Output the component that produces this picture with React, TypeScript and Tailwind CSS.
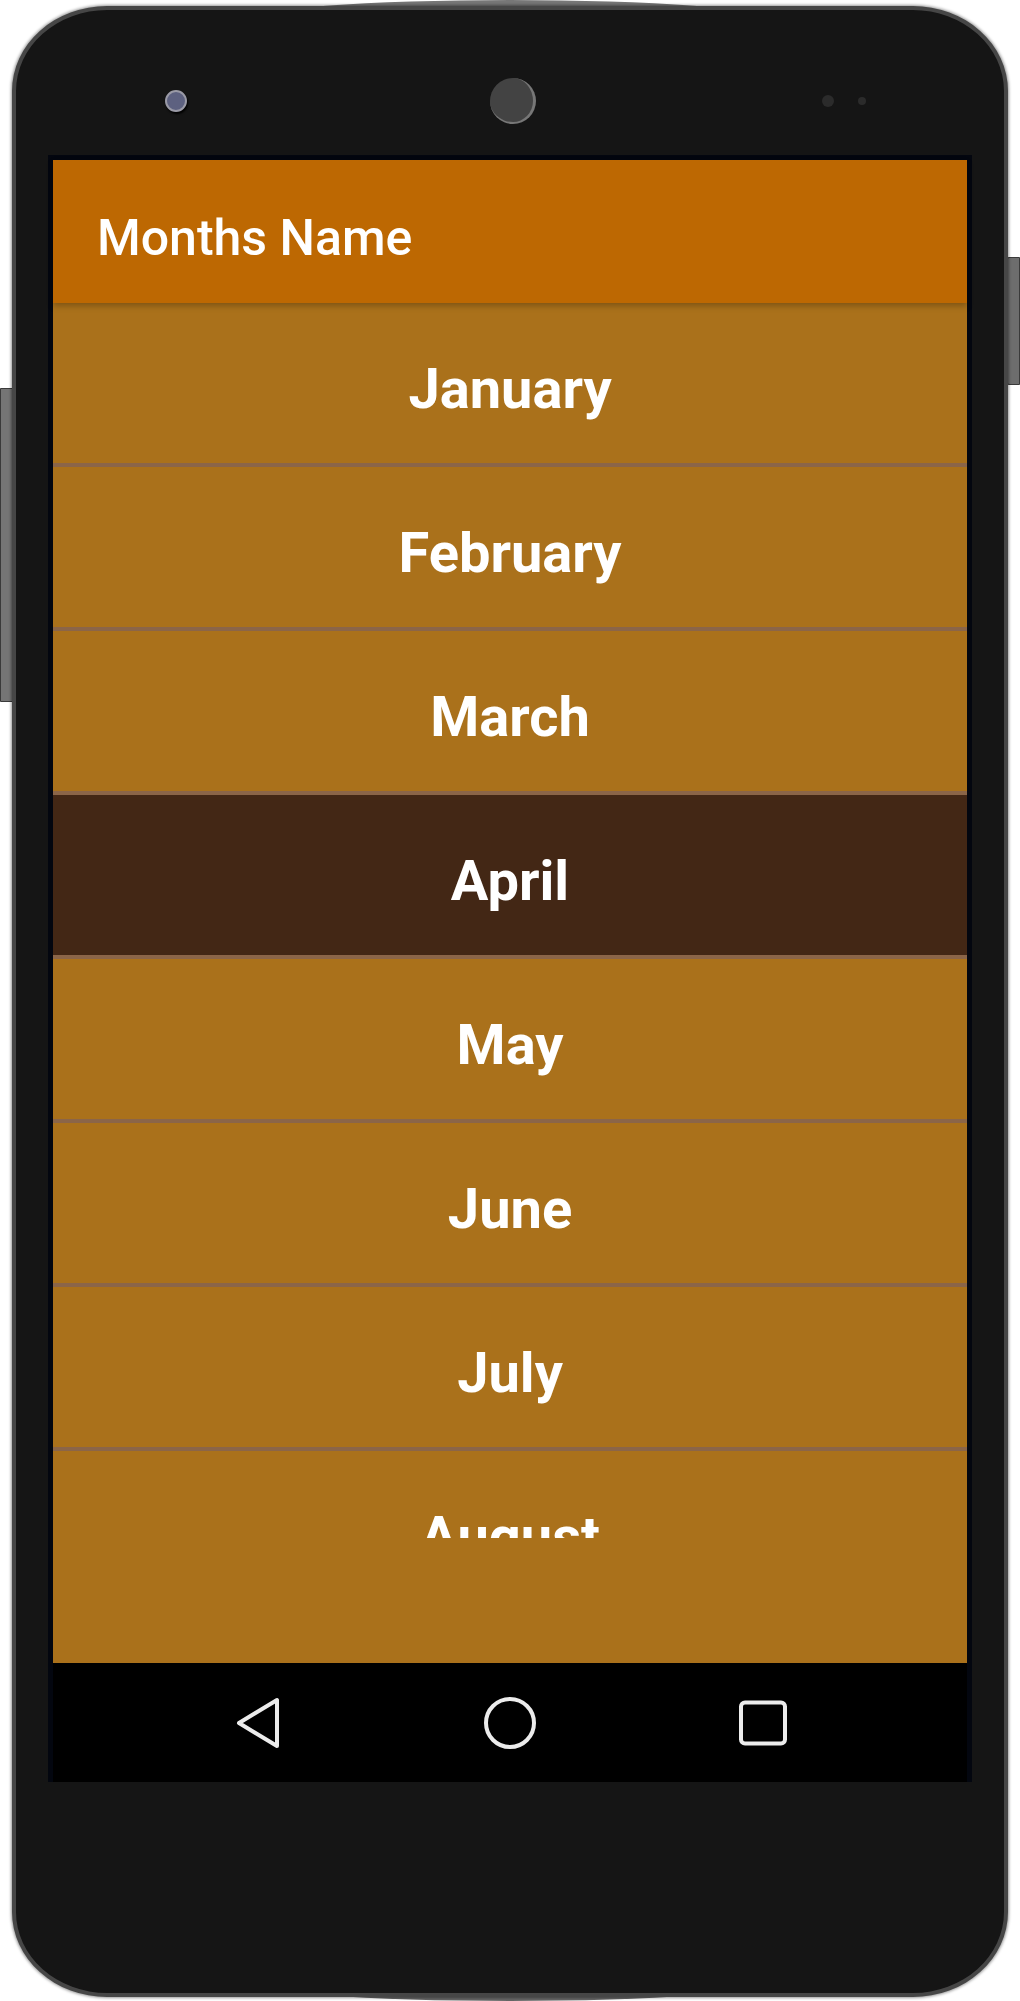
// only the rows that the screen shows; the list is clipped inside August
const MONTHS = ['January', 'February', 'March', 'April', 'May', 'June', 'July', 'August']
const SELECTED = 'April'

export default function App() {
  return (
    <div className="relative w-[1020px] h-[2001px] bg-white overflow-hidden font-['Roboto','Liberation_Sans',sans-serif]">
      {/* side buttons + bevel bumps */}
      <div className="absolute right-0 top-[257px] w-[13px] h-[128px] rounded-l-[2px] bg-[#6d6d6d] border border-[#3a3a3a]" />
      <div className="absolute left-0 top-[388px] w-[14px] h-[314px] rounded-r-[2px] bg-[#757575] border border-[#3a3a3a]" />
      <div className="absolute left-[250px] top-0 w-[520px] h-[40px] rounded-[50%] bg-[#777]" />
      <div className="absolute left-[250px] bottom-0 w-[520px] h-[40px] rounded-[50%] bg-[#666]" />

      <div className="relative pt-[6px] px-[12px]">
        <div className="h-[1991px] flex flex-col bg-[#151515] rounded-[95px/85px] border-4 border-[#464646] shadow-[0_0_3px_1px_rgba(0,0,0,0.4)]">
          {/* top bezel */}
          <div className="h-[145px] shrink-0 flex items-center pt-[36px]">
            <div className="ml-[149px] w-[22px] h-[22px] rounded-full bg-[#5d6180] shadow-[1px_2px_2px_#000] border-2 border-[#9a9aa6]" />
            <div className="ml-[303px] w-[46px] h-[46px] rounded-full bg-[#434343] border-r-[3px] border-b-2 border-[#777]" />
            <div className="ml-[286px] w-[12px] h-[12px] rounded-full bg-[#2b2b2b]" />
            <div className="ml-[24px] w-[8px] h-[8px] rounded-full bg-[#2b2b2b]" />
          </div>

          {/* screen */}
          <div className="mx-auto w-[924px] shrink-0 border-[5px] border-b-0 border-[#03060f]">
            <div className="relative z-10 h-[143px] bg-[#BD6802] flex items-center pl-[44px] pt-[12px] shadow-[0_3px_6px_rgba(0,0,0,0.25)]">
              <span className="text-white text-[50px] font-medium leading-none">Months Name</span>
            </div>

            <div className="h-[1360px] bg-[#AA711B]">
              <div className="h-[1235px] overflow-hidden">
                {MONTHS.map(m => (
                  <div
                    key={m}
                    className={`h-[164px] border-b-4 border-[#8B6548] flex items-center justify-center pt-[12px] ${
                      m === SELECTED ? 'bg-[#432715]' : 'bg-[#AA711B]'
                    }`}
                  >
                    <span className="text-white text-[56px] font-bold leading-none">{m}</span>
                  </div>
                ))}
              </div>
            </div>

            <div className="h-[119px] bg-black flex items-center justify-center gap-[193px]">
              <svg width="60" height="60" viewBox="0 0 60 60" fill="none" stroke="#ececec" strokeWidth="4" strokeLinejoin="round">
                <polygon points="12,30 50,7 50,53" />
              </svg>
              <svg width="60" height="60" viewBox="0 0 60 60" fill="none" stroke="#ececec" strokeWidth="4">
                <circle cx="30" cy="30" r="24" />
              </svg>
              <svg width="60" height="60" viewBox="0 0 60 60" fill="none" stroke="#ececec" strokeWidth="4">
                <rect x="8" y="9.5" width="44" height="41" rx="4" />
              </svg>
            </div>
          </div>

          {/* bottom bezel */}
          <div className="flex-1" />
        </div>
      </div>
    </div>
  )
}
